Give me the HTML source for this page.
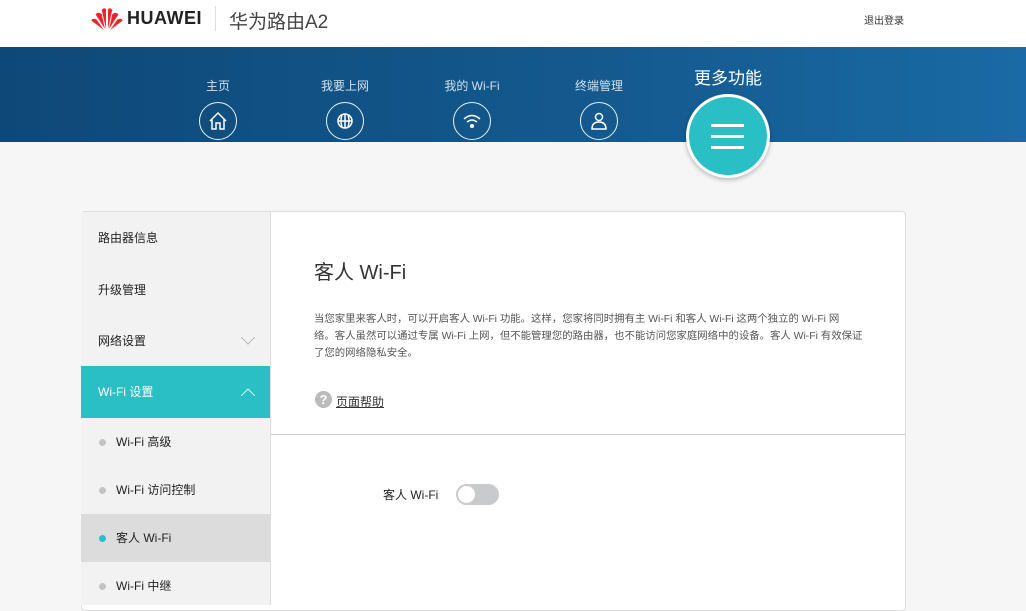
<!DOCTYPE html>
<html><head><meta charset="utf-8"><style>
*{margin:0;padding:0;box-sizing:border-box}
body{width:1026px;height:605px;overflow:hidden;background:#f6f6f6;font-family:"Liberation Sans","Noto Sans CJK SC",sans-serif;position:relative;color:#333}
.top{position:absolute;left:0;top:0;width:1026px;height:47px;background:#fff}
.banner{position:absolute;left:0;top:47px;width:1026px;height:95px;background:linear-gradient(90deg,#0e4878,#145a8f 60%,#1a6aa5);}
.nav{position:absolute;text-align:center;color:#cfe0ee;font-size:12px;width:80px}
.nav .c{width:38px;height:38px;border:1.5px solid #e8f0f7;border-radius:50%;margin:8px auto 0;display:flex;align-items:center;justify-content:center}
.panel{position:absolute;left:81px;top:211px;width:825px;height:400px;background:#fff;border:1px solid #ddd;border-radius:4px}
.side{position:absolute;left:81px;top:212px;width:190px;height:393px;background:#f2f2f2;border-right:1px solid #ddd}
.si{position:absolute;left:0;width:189px;height:52px;font-size:12px;color:#222;padding-left:17px;line-height:52px}
.sub{height:48px;line-height:48px;padding-left:35px}
.dot{position:absolute;left:18px;top:21px;width:7px;height:7px;border-radius:50%;background:#c4c4c8}
</style></head><body>
<div class="top">
<svg style="position:absolute;left:90px;top:6px" width="34" height="25" viewBox="0 0 32 24"><g fill="#e8262b">
<path d="M15 22 L11 4 Q13 1 15 3Z"/><path d="M17 22 L21 4 Q19 1 17 3Z"/><path d="M14 22 L5 8 Q8 5 11 8Z"/><path d="M18 22 L27 8 Q24 5 21 8Z"/><path d="M13 23 L1 14 Q2 11 6 13Z"/><path d="M19 23 L31 14 Q30 11 26 13Z"/></g></svg>
<div style="position:absolute;left:127px;top:8px;font-size:18px;font-weight:bold;color:#222;letter-spacing:0.5px">HUAWEI</div>
<div style="position:absolute;left:215px;top:6px;width:1px;height:25px;background:#ddd"></div>
<div style="position:absolute;left:229px;top:7px;font-size:19px;color:#444">华为路由A2</div>
<div style="position:absolute;left:864px;top:12px;font-size:10px;color:#333">退出登录</div>
</div>
<div class="banner"></div>
<div class="nav" style="left:178px;top:77px">主页<div class="c"><svg width="22" height="22" viewBox="0 0 22 22" fill="none" stroke="#fff" stroke-width="1.5"><path d="M3 11 L11 3 L19 11 M5 9 V19 H9 V13 H13 V19 H17 V9"/></svg></div></div>
<div class="nav" style="left:305px;top:77px">我要上网<div class="c"><svg width="22" height="22" viewBox="0 0 22 22" fill="none" stroke="#fff" stroke-width="1.5"><circle cx="11" cy="11" r="7"/><path d="M4 11H18M11 4V18M8 5Q6 11 8 17M14 5Q16 11 14 17"/></svg></div></div>
<div class="nav" style="left:432px;top:77px">我的 Wi-Fi<div class="c"><svg width="22" height="22" viewBox="0 0 22 22" fill="none" stroke="#fff" stroke-width="1.5"><path d="M3 9Q11 2 19 9M6 12Q11 8 16 12"/><circle cx="11" cy="16" r="1.3" fill="#fff"/></svg></div></div>
<div class="nav" style="left:559px;top:77px">终端管理<div class="c"><svg width="22" height="22" viewBox="0 0 22 22" fill="none" stroke="#fff" stroke-width="1.5"><circle cx="11" cy="7" r="3.5"/><path d="M4 19Q4 12 11 12Q18 12 18 19Z"/></svg></div></div>
<div style="position:absolute;left:688px;top:64px;width:80px;text-align:center;color:#fff;font-size:17px">更多功能</div>
<div style="position:absolute;left:686px;top:94px;width:84px;height:84px;border-radius:50%;background:#29bfc5;border:3px solid #fff;box-shadow:0 2px 5px rgba(0,0,0,.25)"><div style="position:absolute;left:22px;top:27px;width:33px;height:3px;background:#fff;box-shadow:0 11px 0 #fff,0 22px 0 #fff"></div></div>
<div class="panel"></div>
<div class="side">
<div class="si" style="top:0">路由器信息</div>
<div class="si" style="top:52px">升级管理</div>
<div class="si" style="top:103px">网络设置<svg style="position:absolute;left:160px;top:22px" width="14" height="8"><path d="M0 0L7 7L14 0" fill="none" stroke="#bbb"/></svg></div>
<div class="si" style="top:154px;background:#29bfc5;color:#fff">Wi-Fi 设置<svg style="position:absolute;left:160px;top:22px" width="14" height="8"><path d="M0 8L7 1L14 8" fill="none" stroke="#d5f3f4"/></svg></div>
<div class="si sub" style="top:206px"><span class="dot"></span>Wi-Fi 高级</div>
<div class="si sub" style="top:254px"><span class="dot"></span>Wi-Fi 访问控制</div>
<div class="si sub" style="top:302px;background:#dcdcdc"><span class="dot" style="background:#29bfc5"></span>客人 Wi-Fi</div>
<div class="si sub" style="top:350px"><span class="dot"></span>Wi-Fi 中继</div>
</div>
<div style="position:absolute;left:314px;top:256px;font-size:20px;color:#333">客人 Wi-Fi</div>
<div style="position:absolute;left:314px;top:311px;font-size:10.4px;line-height:17px;color:#555;white-space:nowrap">当您家里来客人时，可以开启客人 Wi-Fi 功能。这样，您家将同时拥有主 Wi-Fi 和客人 Wi-Fi 这两个独立的 Wi-Fi 网<br>络。客人虽然可以通过专属 Wi-Fi 上网，但不能管理您的路由器，也不能访问您家庭网络中的设备。客人 Wi-Fi 有效保证<br>了您的网络隐私安全。</div>
<div style="position:absolute;left:315px;top:391px;width:17px;height:17px;border-radius:50%;background:#bbb;color:#fff;font-size:13px;text-align:center;line-height:17px;font-weight:bold">?</div>
<div style="position:absolute;left:336px;top:393px;font-size:12px;color:#333;text-decoration:underline">页面帮助</div>
<div style="position:absolute;left:271px;top:434px;width:634px;height:1px;background:#ccc"></div>
<div style="position:absolute;left:383px;top:486px;font-size:12px;color:#222">客人 Wi-Fi</div>
<div style="position:absolute;left:456px;top:484px;width:43px;height:21px;border-radius:11px;background:#c8cacb"><div style="position:absolute;left:2px;top:2px;width:17px;height:17px;border-radius:50%;background:#fff"></div></div>
</body></html>
